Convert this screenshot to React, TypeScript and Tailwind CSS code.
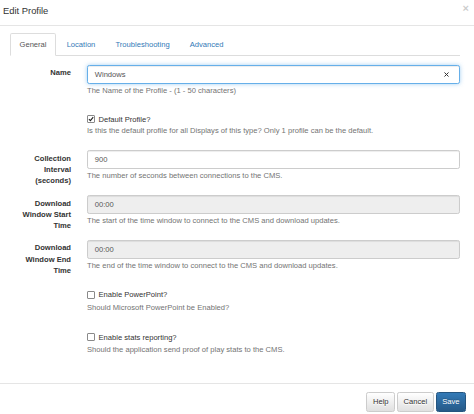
import React from "react";

const tabs = ["General", "Location", "Troubleshooting", "Advanced"];

function Label({ lines }: { lines: string[] }) {
  return (
    <div className="w-[61px] shrink-0 pt-[2.4px] text-right font-bold text-[#333]">
      {lines.map((l) => (
        <div key={l}>{l}</div>
      ))}
    </div>
  );
}

function Help({ children }: { children: React.ReactNode }) {
  return <p className="mt-[0.6px] text-[#737373]">{children}</p>;
}

function Input({ value, disabled, focused }: { value: string; disabled?: boolean; focused?: boolean }) {
  const base = "relative flex h-[19px] items-center rounded-[2.3px] border px-[6.8px] text-[#555]";
  const look = focused
    ? "border-[#66afe9] bg-white shadow-[inset_0_1px_1px_rgba(0,0,0,0.075),0_0_4px_rgba(102,175,233,0.6)]"
    : disabled
      ? "border-[#ccc] bg-[#eee] shadow-[inset_0_1px_1px_rgba(0,0,0,0.075)]"
      : "border-[#ccc] bg-white shadow-[inset_0_1px_1px_rgba(0,0,0,0.075)]";
  return (
    <div className={`${base} ${look}`}>
      <span>{value}</span>
      {focused && (
        <svg className="absolute right-[10px] top-[6px] h-[5px] w-[5px]" viewBox="0 0 10 10">
          <path d="M1.5 1.5 8.5 8.5M8.5 1.5 1.5 8.5" stroke="#333" strokeWidth={2} strokeLinecap="round" />
        </svg>
      )}
    </div>
  );
}

function Check({ label, checked }: { label: string; checked?: boolean }) {
  return (
    <div className="flex items-center">
      <span className="mr-[3.5px] flex h-[8px] w-[8px] items-center justify-center rounded-[1px] border border-[#8a8a8a] bg-white">
        {checked && (
          <svg className="h-[6px] w-[6px]" viewBox="0 0 10 10">
            <path d="M1.5 5.2 4 7.8 8.7 2" fill="none" stroke="#222" strokeWidth={1.8} />
          </svg>
        )}
      </span>
      <span className="text-[#333]">{label}</span>
    </div>
  );
}

export default function App() {
  return (
    <div className="flex h-[414px] w-[474px] flex-col overflow-hidden bg-white font-['Liberation_Sans',Arial,Helvetica,sans-serif] text-[7.6px] leading-[11.3px] text-[#333]">
      {/* Header */}
      <div className="flex h-[26px] shrink-0 items-start justify-between border-b border-[#e5e5e5] pl-[3px] pr-[5px]">
        <h4 className="pt-[3.5px] text-[9.4px] leading-[13px] text-[#333]">Edit Profile</h4>
        <button className="pt-[3px] text-[11px] font-bold leading-[11px] text-black opacity-20">×</button>
      </div>

      {/* Body */}
      <div className="flex-1 pl-[10px] pr-[14px] pt-[7px]">
        <ul className="flex border-b border-[#ddd]">
          {tabs.map((t, i) => (
            <li key={t} className="-mb-px mr-[1.1px]">
              <a
                className={
                  i === 0
                    ? "block rounded-t-[2.3px] border border-[#ddd] border-b-transparent bg-white px-[8.5px] py-[5px] text-[#555]"
                    : "block rounded-t-[2.3px] border border-transparent px-[8.5px] py-[5px] text-[#337ab7]"
                }
              >
                {t}
              </a>
            </li>
          ))}
        </ul>

        <div className="mt-[8.7px]">
          <div className="flex gap-[16px]">
            <Label lines={["Name"]} />
            <div className="min-w-0 flex-1">
              <Input value="Windows" focused />
              <Help>The Name of the Profile - (1 - 50 characters)</Help>
            </div>
          </div>

          <div className="mt-[17.8px] flex gap-[16px]">
            <div className="w-[61px] shrink-0" />
            <div className="min-w-0 flex-1">
              <Check label="Default Profile?" checked />
              <p className="mt-[0.5px] text-[#737373]">
                Is this the default profile for all Displays of this type? Only 1 profile can be the default.
              </p>
            </div>
          </div>

          <div className="mt-[13.4px] flex gap-[16px]">
            <Label lines={["Collection", "Interval", "(seconds)"]} />
            <div className="min-w-0 flex-1">
              <Input value="900" />
              <Help>The number of seconds between connections to the CMS.</Help>
            </div>
          </div>

          <div className="mt-[8.7px] flex gap-[16px]">
            <Label lines={["Download", "Window Start", "Time"]} />
            <div className="min-w-0 flex-1">
              <Input value="00:00" disabled />
              <Help>The start of the time window to connect to the CMS and download updates.</Help>
            </div>
          </div>

          <div className="mt-[8.7px] flex gap-[16px]">
            <Label lines={["Download", "Window End", "Time"]} />
            <div className="min-w-0 flex-1">
              <Input value="00:00" disabled />
              <Help>The end of the time window to connect to the CMS and download updates.</Help>
            </div>
          </div>

          <div className="mt-[13px] flex gap-[16px]">
            <div className="w-[61px] shrink-0" />
            <div className="min-w-0 flex-1">
              <Check label="Enable PowerPoint?" />
              <p className="mt-[1.4px] text-[#737373]">Should Microsoft PowerPoint be Enabled?</p>
            </div>
          </div>

          <div className="mt-[18.2px] flex gap-[16px]">
            <div className="w-[61px] shrink-0" />
            <div className="min-w-0 flex-1">
              <Check label="Enable stats reporting?" />
              <p className="mt-[1.4px] text-[#737373]">Should the application send proof of play stats to the CMS.</p>
            </div>
          </div>
        </div>
      </div>

      {/* Footer */}
      <div className="flex h-[31px] shrink-0 items-start justify-end gap-[2px] border-t border-[#e5e5e5] pr-[8px] pt-[8px]">
        <button className="h-[19.5px] rounded-[2.3px] border border-[#ccc] bg-gradient-to-b from-white to-[#e0e0e0] px-[5.5px] text-[#333] [text-shadow:0_1px_0_#fff]">
          Help
        </button>
        <button className="h-[19.5px] rounded-[2.3px] border border-[#ccc] bg-gradient-to-b from-white to-[#e0e0e0] px-[5.5px] text-[#333] [text-shadow:0_1px_0_#fff]">
          Cancel
        </button>
        <button className="h-[19.5px] rounded-[2.3px] border border-[#245580] bg-gradient-to-b from-[#337ab7] to-[#265a88] px-[5.5px] text-white [text-shadow:0_-1px_0_rgba(0,0,0,0.2)]">
          Save
        </button>
      </div>
    </div>
  );
}
